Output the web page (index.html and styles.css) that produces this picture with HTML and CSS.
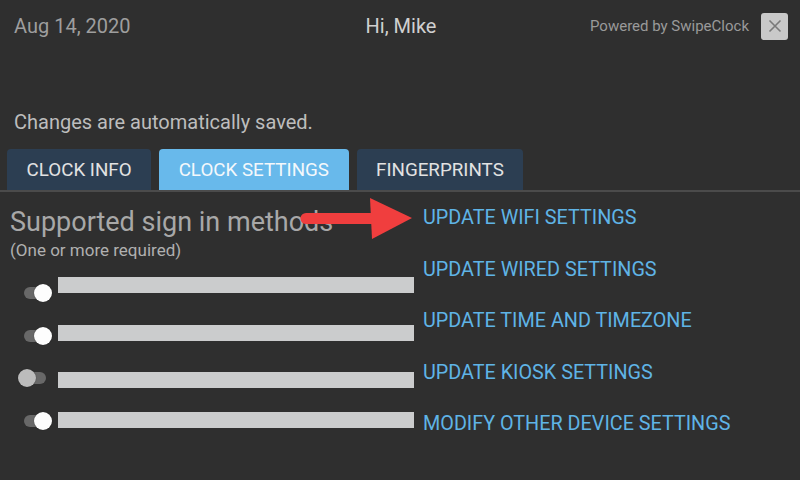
FILE: index.html
```html
<!DOCTYPE html>
<html>
<head>
<meta charset="utf-8">
<link rel="stylesheet" href="styles.css">
</head>
<body>
<div class="screen">
  <header class="top">
    <div class="date">Aug 14, 2020</div>
    <div class="greet">Hi, Mike</div>
    <div class="right">
      <span class="powered">Powered by SwipeClock</span>
      <button class="close" aria-label="Close">
        <svg width="14" height="14" viewBox="0 0 14 14"><path d="M1.5 1.5 L12.5 12.5 M12.5 1.5 L1.5 12.5" stroke="#7a7a7a" stroke-width="1.6" fill="none"/></svg>
      </button>
    </div>
  </header>
  <p class="saved">Changes are automatically saved.</p>
  <nav class="tabs">
    <div class="tab">CLOCK INFO</div>
    <div class="tab active">CLOCK SETTINGS</div>
    <div class="tab">FINGERPRINTS</div>
  </nav>
  <main class="content">
    <section class="methods">
      <h2 class="title">Supported sign in methods</h2>
      <div class="sub">(One or more required)</div>
      <div class="rows">
        <div class="row r1"><span class="toggle on"><span class="knob"></span></span><span class="bar"></span></div>
        <div class="row r2"><span class="toggle on"><span class="knob"></span></span><span class="bar"></span></div>
        <div class="row r3"><span class="toggle off"><span class="knob"></span></span><span class="bar"></span></div>
        <div class="row r4"><span class="toggle on"><span class="knob"></span></span><span class="bar"></span></div>
      </div>
    </section>
    <section class="links">
      <a class="link">UPDATE WIFI SETTINGS</a>
      <a class="link">UPDATE WIRED SETTINGS</a>
      <a class="link">UPDATE TIME AND TIMEZONE</a>
      <a class="link">UPDATE KIOSK SETTINGS</a>
      <a class="link">MODIFY OTHER DEVICE SETTINGS</a>
    </section>
    <svg class="arrow" width="118" height="48" viewBox="0 0 118 48">
      <line x1="8" y1="23.5" x2="78" y2="23.5" stroke="#f03e3e" stroke-width="11" stroke-linecap="round"/>
      <polygon points="72,3 114,23 74,44" fill="#f03e3e"/>
    </svg>
  </main>
</div>
</body>
</html>
```
FILE: styles.css
```css
* { box-sizing: border-box; }
html, body { margin: 0; padding: 0; }
body {
  background: #2f2f2f;
  font-family: Roboto, "Liberation Sans", sans-serif;
  width: 800px;
  height: 480px;
  overflow: hidden;
}
.screen { position: relative; width: 800px; height: 480px; }
.top {
  display: grid;
  grid-template-columns: 1fr auto 1fr;
  align-items: center;
  height: 52px;
  padding: 0 12px 0 14px;
}
.date { font-size: 20px; color: #9e9e9e; }
.greet { font-size: 20px; color: #d0d0d0; }
.right { display: flex; justify-content: flex-end; align-items: center; gap: 12px; }
.powered { font-size: 15px; color: #9a9a9a; }
.close {
  width: 27px; height: 27px;
  border: 0; border-radius: 3px;
  background: #c9c9c9;
  display: flex; align-items: center; justify-content: center;
  padding: 0;
}
.saved {
  margin: 56px 0 0 14px;
  font-size: 20px;
  color: #bdbdbd;
  line-height: 28px;
}
.tabs {
  display: flex;
  gap: 8px;
  padding: 0 0 0 7px;
  margin-top: 13px;
  border-bottom: 2px solid #4b4b4b;
}
.tab {
  height: 41px;
  padding: 0 19.5px;
  display: flex; align-items: center;
  background: #2c3e52;
  color: #e2e2e2;
  font-size: 18.8px;
  border-radius: 4px 4px 0 0;
}
.tab.active { background: #68b9eb; color: #f4f8fb; }
.content { position: relative; display: flex; }
.methods { width: 414px; padding-left: 10px; }
.title {
  margin: 14px 0 0 0;
  font-size: 27px;
  font-weight: 400;
  color: #a8a8a8;
  line-height: 32px;
}
.sub { font-size: 17px; color: #b0b0b0; line-height: 20px; margin-top: 2px; }
.rows { margin-top: 13px; }
.row { display: flex; align-items: flex-start; height: 42.5px; }
.toggle {
  position: relative;
  width: 36px; height: 18px;
  margin-left: 8px;
  flex: none;
}
.toggle::before {
  content: "";
  position: absolute;
  left: 6px; top: 3px;
  width: 22px; height: 12px;
  border-radius: 6px;
  background: #686868;
}
.knob {
  position: absolute;
  top: 0;
  width: 18px; height: 18px;
  border-radius: 50%;
  background: #fdfdfd;
  box-shadow: 0 0 1px rgba(0,0,0,0.6);
}
.toggle.on .knob { left: 16px; }
.toggle.off .knob { left: 0; background: #bcbcbc; }
.bar { display: block; width: 356px; height: 16px; background: #cbcccd; margin-left: 4px; }
.r1 .toggle { margin-top: 11px; } .r1 .bar { margin-top: 4px; }
.r2 .toggle { margin-top: 11px; } .r2 .bar { margin-top: 9px; }
.r3 .toggle { margin-top: 11px; } .r3 .bar { margin-top: 14px; }
.r4 .toggle { margin-top: 11px; } .r4 .bar { margin-top: 11px; }
.links { display: flex; flex-direction: column; padding-left: 9px; padding-top: 0; }
.link {
  font-size: 19.8px;
  color: #5fb4e6;
  line-height: 51.5px;
  height: 51.5px;
}
.arrow { position: absolute; left: 298px; top: 3px; }
```
